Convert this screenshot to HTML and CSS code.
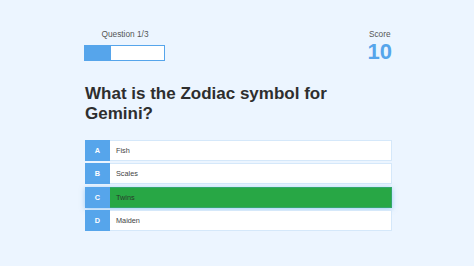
FILE: index.html
```html
<!DOCTYPE html>
<html lang="en">
<head>
<meta charset="utf-8">
<title>Quiz</title>
<link rel="stylesheet" href="styles.css">
</head>
<body>
<div class="container">
  <div class="hud">
    <div class="hud-item">
      <p class="hud-prefix">Question 1/3</p>
      <div class="progress"><div class="progress-fill" style="width: 33.3%"></div></div>
    </div>
    <div class="hud-item">
      <p class="hud-prefix">Score</p>
      <p class="hud-main">10</p>
    </div>
  </div>
  <h1 class="question">What is the Zodiac symbol for Gemini?</h1>
  <div class="choices">
    <div class="choice"><span class="choice-prefix">A</span><span class="choice-text">Fish</span></div>
    <div class="choice"><span class="choice-prefix">B</span><span class="choice-text">Scales</span></div>
    <div class="choice choice-correct"><span class="choice-prefix">C</span><span class="choice-text">Twins</span></div>
    <div class="choice"><span class="choice-prefix">D</span><span class="choice-text">Maiden</span></div>
  </div>
</div>
</body>
</html>
```

FILE: styles.css
```css
* {
  box-sizing: border-box;
}
html, body {
  margin: 0;
  padding: 0;
}
body {
  background: #ecf5ff;
  font-family: "Liberation Sans", Arial, sans-serif;
  color: #333;
  width: 474px;
  height: 266px;
  overflow: hidden;
}
p {
  margin: 0;
}
.container {
  width: 307px;
  margin-left: 85px;
  padding-top: 29px;
}
.hud {
  display: flex;
  justify-content: space-between;
  align-items: flex-start;
}
.hud-item {
  display: flex;
  flex-direction: column;
  align-items: center;
}
.hud-prefix {
  font-size: 8.3px;
  line-height: 10px;
  color: #555;
}
.progress {
  margin-top: 6px;
  margin-left: -1px;
  width: 81px;
  height: 16px;
  border: 1px solid #56a5eb;
  background: #fff;
}
.progress-fill {
  height: 100%;
  background: #56a5eb;
}
.hud-main {
  margin-top: 1.5px;
  font-size: 22px;
  line-height: 22px;
  font-weight: bold;
  color: #56a5eb;
}
.question {
  margin: 0;
  margin-top: 21.7px;
  font-size: 17px;
  line-height: 19.5px;
  font-weight: bold;
  color: #2e2e2e;
}
.choices {
  margin-top: 17px;
  display: flex;
  flex-direction: column;
  gap: 2.3px;
}
.choice {
  display: flex;
  height: 21px;
  background: #fff;
  border: 1px solid rgba(86, 165, 235, 0.25);
  font-size: 7.3px;
  color: #444;
}
.choice-prefix {
  width: 25px;
  margin: -1px 0 -1px -1px;
  background: #56a5eb;
  color: #fff;
  display: flex;
  align-items: center;
  justify-content: center;
  font-weight: bold;
}
.choice-text {
  display: flex;
  align-items: center;
  padding-left: 6px;
}
.choice-correct {
  background: #28a745;
  color: #2a3b2c;
  box-shadow: 0 1px 5px 0 rgba(86, 165, 235, 0.5);
}
```
